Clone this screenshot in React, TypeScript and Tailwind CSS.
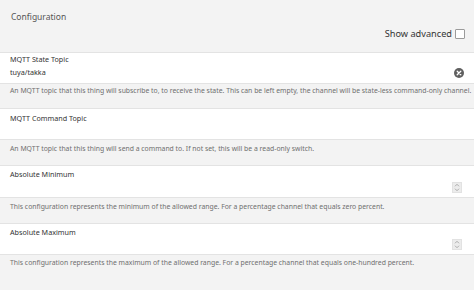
import React from "react";

const font = { fontFamily: '"Segoe UI", "Noto Sans", "Open Sans", sans-serif' };

function ClearIcon() {
  return (
    <svg width="10" height="10" viewBox="0 0 10 10">
      <circle cx="5" cy="5" r="5" fill="#5f5f5f" />
      <path d="M3.2 3.2 L6.8 6.8 M6.8 3.2 L3.2 6.8" stroke="#fff" strokeWidth="1.3" strokeLinecap="round" />
    </svg>
  );
}

function Spinner() {
  return (
    <div className="w-[10px] h-[11px] bg-[#ececec] border border-[#e2e2e2] flex items-center justify-center">
      <svg width="6" height="9" viewBox="0 0 6 9">
        <path d="M1 3.3 L3 1.3 L5 3.3" stroke="#9a9a9a" strokeWidth="0.8" fill="none" />
        <path d="M1 5.7 L3 7.7 L5 5.7" stroke="#9a9a9a" strokeWidth="0.8" fill="none" />
      </svg>
    </div>
  );
}

function Desc({ text, h, pt }: { text: string; h: string; pt: string }) {
  return (
    <div className={`bg-[#f3f3f3] border-t border-[#e3e3e3] px-[10px] ${h} ${pt}`}>
      <div className="text-[6.85px] leading-[10px] text-[#6f6f6f] whitespace-nowrap">{text}</div>
    </div>
  );
}

export default function App() {
  return (
    <div className="w-[474px] h-[290px] bg-[#f3f3f3] overflow-hidden" style={font}>
      <div className="h-[52px] pl-[11px] pr-[9px]">
        <div className="pt-[11px] text-[8.5px] leading-[12px] text-[#555]">Configuration</div>
        <div className="flex justify-end items-center gap-[3px] mt-[5px]">
          <span className="text-[9.2px] leading-[12px] text-[#333]">Show advanced</span>
          <span className="w-[10px] h-[10px] border border-[#9b9b9b] bg-white rounded-[1px]" />
        </div>
      </div>

      <div className="bg-white border-t border-[#e3e3e3] h-[31px] px-[10px] flex">
        <div className="flex-1">
          <div className="text-[7.2px] leading-[10px] text-[#333] mt-[1px]">MQTT State Topic</div>
          <div className="text-[7.2px] leading-[10px] text-[#333] mt-[3px]">tuya/takka</div>
        </div>
        <div className="flex items-end pb-[5px]">
          <ClearIcon />
        </div>
      </div>
      <Desc
        h="h-[25px]"
        pt="pt-[2px]"
        text="An MQTT topic that this thing will subscribe to, to receive the state. This can be left empty, the channel will be state-less command-only channel."
      />

      <div className="bg-white border-t border-[#e3e3e3] h-[31px] px-[10px]">
        <div className="text-[7.2px] leading-[10px] text-[#333] mt-[4px]">MQTT Command Topic</div>
      </div>
      <Desc
        h="h-[26px]"
        pt="pt-[4px]"
        text="An MQTT topic that this thing will send a command to. If not set, this will be a read-only switch."
      />

      <div className="bg-white border-t border-[#e3e3e3] h-[32px] px-[10px] flex">
        <div className="flex-1">
          <div className="text-[7.2px] leading-[10px] text-[#333] mt-[3px]">Absolute Minimum</div>
        </div>
        <div className="flex items-end pb-[4px] pr-[2px]">
          <Spinner />
        </div>
      </div>
      <Desc
        h="h-[26px]"
        pt="pt-[4px]"
        text="This configuration represents the minimum of the allowed range. For a percentage channel that equals zero percent."
      />

      <div className="bg-white border-t border-[#e3e3e3] h-[31px] px-[10px] flex">
        <div className="flex-1">
          <div className="text-[7.2px] leading-[10px] text-[#333] mt-[3px]">Absolute Maximum</div>
        </div>
        <div className="flex items-end pb-[4px] pr-[2px]">
          <Spinner />
        </div>
      </div>
      <Desc
        h="h-[40px]"
        pt="pt-[3px]"
        text="This configuration represents the maximum of the allowed range. For a percentage channel that equals one-hundred percent."
      />
    </div>
  );
}
